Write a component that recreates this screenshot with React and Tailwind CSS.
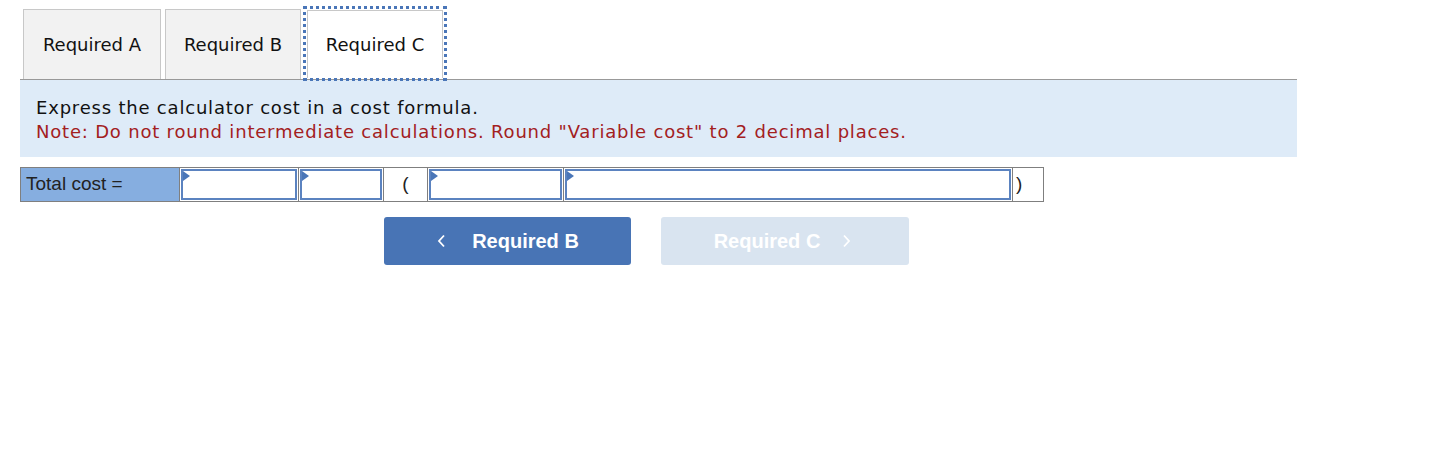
import React from "react";

const Flag = () => (
  <span className="absolute left-0 top-0 w-0 h-0 border-t-[5px] border-b-[5px] border-l-[7px] border-t-transparent border-b-transparent border-l-[#4a76b8]" />
);

const InputCell = ({ w }) => (
  <div className={`${w} h-full border-r border-[#7f7f7f] p-px`}>
    <div className="relative h-full border-2 border-[#5b83c0] bg-white">
      <Flag />
    </div>
  </div>
);

export default function App() {
  const verdana = { fontFamily: '"DejaVu Sans", Verdana, sans-serif' };
  const arial = { fontFamily: '"Liberation Sans", Arial, sans-serif' };
  return (
    <div className="w-[1440px] h-[454px] bg-white pt-[6px] pl-[20px]" style={verdana}>
      <div className="w-[1277px]">
        <div className="flex items-end h-[73px] pl-[3px] gap-[4px]">
          <div className="w-[138px] h-[70px] bg-[#f2f2f2] border border-[#c8c8c8] border-b-0 flex items-center justify-center text-[18px] text-[#111]">
            Required A
          </div>
          <div className="w-[136px] h-[70px] bg-[#f2f2f2] border border-[#c8c8c8] border-b-0 flex items-center justify-center text-[18px] text-[#111]">
            Required B
          </div>
          <div className="relative z-10 w-[144px] h-[75px] -mb-[2px] border-[3px] border-dotted border-[#4a76b8] -ml-[2px] p-px pb-0 flex">
            <div className="flex-1 bg-white border border-[#c8c8c8] border-b-0 flex items-center justify-center text-[18px] text-[#111]">
              Required C
            </div>
          </div>
        </div>
        <div className="h-px bg-[#999]" />
        <div className="bg-[#deebf8] h-[77px] pl-[16px] pt-[16px] text-[18px] leading-[24px] tracking-[0.8px]">
          <div className="text-[#111]">Express the calculator cost in a cost formula.</div>
          <div className="text-[#a3201e]">Note: Do not round intermediate calculations. Round "Variable cost" to 2 decimal places.</div>
        </div>
      </div>

      <div className="mt-[10px] flex h-[35px] w-[1024px] border border-[#7f7f7f]">
        <div className="w-[159px] h-full bg-[#86aee0] border-r border-[#7f7f7f] flex items-center pl-[5px] text-[19px] text-[#222]" style={arial}>
          Total cost =
        </div>
        <InputCell w="w-[119px]" />
        <InputCell w="w-[85px]" />
        <div className="w-[44px] h-full border-r border-[#7f7f7f] flex items-center justify-center text-[19px] text-[#222]" style={arial}>
          (
        </div>
        <InputCell w="w-[136px]" />
        <InputCell w="w-[449px]" />
        <div className="flex-1 h-full flex items-center pl-[3px] text-[19px] text-[#222]" style={arial}>
          )
        </div>
      </div>

      <div className="mt-[15px] ml-[364px] flex gap-[30px]" style={arial}>
        <button className="w-[247px] h-[48px] rounded-[3px] bg-[#4874b5] text-white text-[20px] font-bold flex items-center justify-center">
          <svg width="12" height="16" viewBox="0 0 12 16" className="mr-[24px]">
            <path d="M8 2.5 L3 8 L8 13.5" fill="none" stroke="white" strokeWidth="1.8" />
          </svg>
          Required B
        </button>
        <button className="w-[248px] h-[48px] rounded-[3px] bg-[#d9e4f0] text-white text-[20px] font-bold flex items-center justify-center">
          Required C
          <svg width="12" height="16" viewBox="0 0 12 16" className="ml-[20px] mr-[4px]">
            <path d="M4 2.5 L9 8 L4 13.5" fill="none" stroke="white" strokeWidth="1.8" />
          </svg>
        </button>
      </div>
    </div>
  );
}
